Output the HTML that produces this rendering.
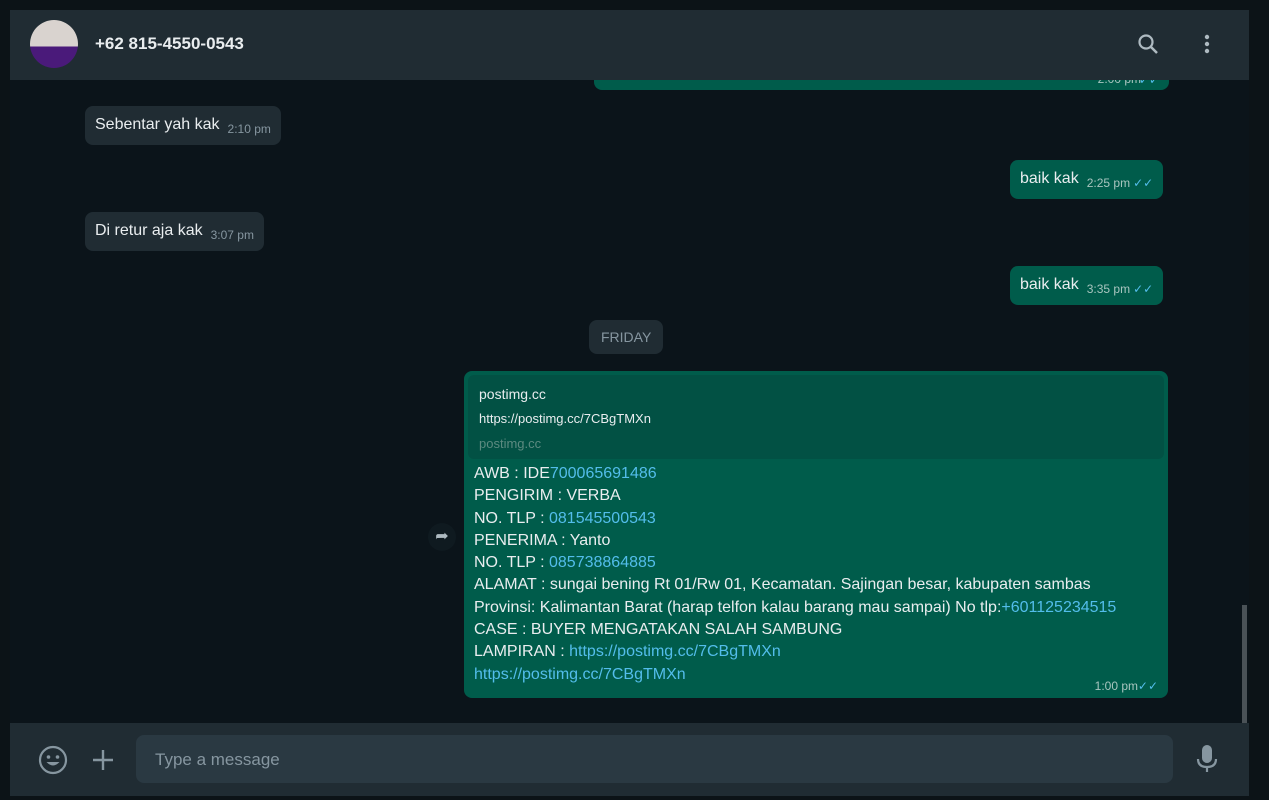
<!DOCTYPE html><html><head><style>
body{margin:0;width:1269px;height:800px;background:#0c1317;font-family:"Liberation Sans",sans-serif;overflow:hidden;position:relative}
.app{position:absolute;left:10px;top:10px;width:1239px;height:786px;background:#0b141a;overflow:hidden}
.hdr{position:absolute;left:0;top:0;width:1239px;height:70px;background:#202c33}
.av{position:absolute;left:20px;top:10px;width:48px;height:48px;border-radius:50%;background:linear-gradient(#d9d3cf 0 55%,#4a1a7a 55%)}
.name{position:absolute;left:85px;top:24px;color:#e9edef;font-size:17px;font-weight:bold}
.b{position:absolute;border-radius:8px;color:#e9edef;font-size:16px;padding:10px 10px 11px}
.in{background:#202c33}.out{background:#005c4b}
.t{font-size:12px;color:#8696a0;margin-left:8px;position:relative;top:4px}
.out .t{color:#a8c5bf}
.tk{color:#53bdeb;font-size:12px;margin-left:3px;position:relative;top:4px}
.ftr{position:absolute;left:0;top:713px;width:1239px;height:73px;background:#202c33}
.inp{position:absolute;left:126px;top:12px;width:1037px;height:48px;border-radius:8px;background:#2a3942;color:#8696a0;font-size:17px;line-height:50px;padding-left:19px;box-sizing:border-box}
.l{color:#53bdeb}
.big{left:454px;top:361px;width:704px;height:327px;padding:4px;box-sizing:border-box;font-size:16px;line-height:22.3px}
.pv{background:#025144;border-radius:6px;height:84px;padding:10px 11px;box-sizing:border-box;font-size:14px;line-height:18px}
</style></head><body>
<div class="app">
<div class="b out" style="left:584px;top:50px;width:575px;height:30px;padding:0"><span class="t" style="position:absolute;right:28px;top:12px">2:00 pm</span><span class="tk" style="position:absolute;right:10px;top:13px">✓✓</span></div>
<div class="b in" style="left:75px;top:96px">Sebentar yah kak<span class="t">2:10 pm</span></div>
<div class="b out" style="left:1000px;top:150px">baik kak<span class="t">2:25 pm</span><span class="tk">✓✓</span></div>
<div class="b in" style="left:75px;top:202px">Di retur aja kak<span class="t">3:07 pm</span></div>
<div class="b out" style="left:1000px;top:256px">baik kak<span class="t">3:35 pm</span><span class="tk">✓✓</span></div>
<div class="b in" style="left:579px;top:310px;font-size:14px;color:#8696a0;padding:9px 12px">FRIDAY</div>
<div style="position:absolute;left:418px;top:513px;width:28px;height:28px;border-radius:50%;background:#0f1a20;color:#aebac1;text-align:center;line-height:28px;font-size:16px">➦</div>
<div class="b out big"><div class="pv"><div>postimg.cc</div><div style="font-size:13px;margin-top:7px">https://postimg.cc/7CBgTMXn</div><div style="font-size:13px;margin-top:7px;color:#5c8a80">postimg.cc</div></div>
<div style="padding:4px 6px">AWB : IDE<span class="l">700065691486</span><br>PENGIRIM : VERBA<br>NO. TLP : <span class="l">081545500543</span><br>PENERIMA : Yanto<br>NO. TLP : <span class="l">085738864885</span><br>ALAMAT : sungai bening Rt 01/Rw 01, Kecamatan. Sajingan besar, kabupaten sambas<br>Provinsi: Kalimantan Barat (harap telfon kalau barang mau sampai) No tlp:<span class="l">+601125234515</span><br>CASE : BUYER MENGATAKAN SALAH SAMBUNG<br>LAMPIRAN : <span class="l">https://postimg.cc/7CBgTMXn</span><br><span class="l">https://postimg.cc/7CBgTMXn</span></div>
<span class="t" style="position:absolute;right:30px;top:308px;line-height:14px">1:00 pm</span><span class="tk" style="position:absolute;right:10px;top:308px;line-height:14px">✓✓</span></div>
<div style="position:absolute;left:1232px;top:595px;width:5px;height:118px;background:#4a5257"></div>
<div class="hdr"><div class="av"></div><div class="name">+62 815-4550-0543</div>
<svg style="position:absolute;left:1126px;top:22px" width="24" height="24" viewBox="0 0 24 24"><circle cx="10" cy="10" r="6.5" stroke="#aebac1" stroke-width="2.2" fill="none"/><path d="M15 15l6 6" stroke="#aebac1" stroke-width="2.5"/></svg>
<svg style="position:absolute;left:1192px;top:23px" width="10" height="24"><circle cx="5" cy="4" r="2.2" fill="#aebac1"/><circle cx="5" cy="11" r="2.2" fill="#aebac1"/><circle cx="5" cy="18" r="2.2" fill="#aebac1"/></svg></div>
<div class="ftr">
<svg style="position:absolute;left:28px;top:22px" width="30" height="30" viewBox="0 0 30 30"><circle cx="15" cy="15" r="13" stroke="#8696a0" stroke-width="2.2" fill="none"/><circle cx="10.5" cy="12" r="1.8" fill="#8696a0"/><circle cx="19.5" cy="12" r="1.8" fill="#8696a0"/><path d="M8.5 17q6.5 7 13 0z" fill="#8696a0"/></svg>
<svg style="position:absolute;left:82px;top:26px" width="22" height="22"><path d="M11 1v20M1 11h20" stroke="#8696a0" stroke-width="2.4"/></svg>
<div class="inp">Type a message</div>
<svg style="position:absolute;left:1186px;top:22px" width="22" height="30" viewBox="0 0 22 30"><rect x="6" y="0" width="10" height="18" rx="5" fill="#8696a0"/><path d="M2 14q0 8 9 8t9-8" stroke="#8696a0" stroke-width="2.2" fill="none"/><path d="M11 22v5" stroke="#8696a0" stroke-width="2.2"/></svg>
</div></div>
</body></html>
